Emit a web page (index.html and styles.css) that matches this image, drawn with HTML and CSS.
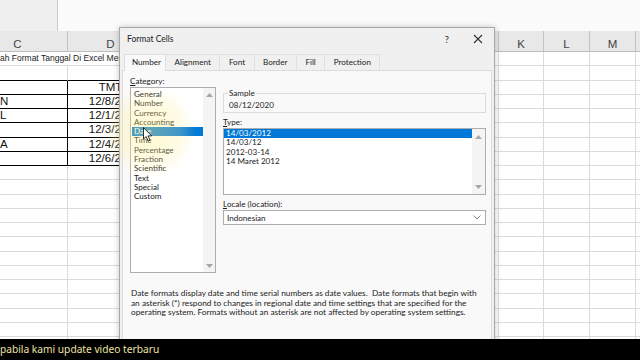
FILE: index.html
```html
<!DOCTYPE html>
<html lang="id">
<head>
  <meta charset="UTF-8" />
  <title>Format Cells - Excel</title>
  <link rel="stylesheet" href="styles.css">
</head>
<body>
<div class="screen">

  <div class="topbar"><div class="namebox"></div></div>

  <table class="sheet">
    <colgroup>
      <col style="width:100px"><col style="width:86px"><col style="width:345px">
      <col style="width:45px"><col style="width:46px"><col style="width:46px"><col style="width:46px">
    </colgroup>
    <tr class="colhdr">
      <td class="ch-c">C</td><td>D</td><td></td><td>K</td><td>L</td><td>M</td><td></td>
    </tr>
    <tr><td colspan="3" class="title">ah Format Tanggal Di Excel Menjadi Teks</td><td></td><td></td><td></td><td></td></tr>
    <tr class="above-box"><td></td><td></td><td></td><td></td><td></td><td></td><td></td></tr>
    <tr class="box"><td class="name"></td><td class="head">TMT</td><td></td><td></td><td></td><td></td><td></td></tr>
    <tr class="box"><td class="name">N</td><td class="date">12/8/2020</td><td></td><td></td><td></td><td></td><td></td></tr>
    <tr class="box"><td class="name">L</td><td class="date">12/1/2020</td><td></td><td></td><td></td><td></td><td></td></tr>
    <tr class="box"><td class="name"></td><td class="date">12/3/2020</td><td></td><td></td><td></td><td></td><td></td></tr>
    <tr class="box"><td class="name">A</td><td class="date">12/4/2020</td><td></td><td></td><td></td><td></td><td></td></tr>
    <tr class="box"><td class="name"></td><td class="date">12/6/2020</td><td></td><td></td><td></td><td></td><td></td></tr>
    <tr><td></td><td></td><td></td><td></td><td></td><td></td><td></td></tr>
    <tr><td></td><td></td><td></td><td></td><td></td><td></td><td></td></tr>
    <tr><td></td><td></td><td></td><td></td><td></td><td></td><td></td></tr>
    <tr><td></td><td></td><td></td><td></td><td></td><td></td><td></td></tr>
    <tr><td></td><td></td><td></td><td></td><td></td><td></td><td></td></tr>
    <tr><td></td><td></td><td></td><td></td><td></td><td></td><td></td></tr>
    <tr><td></td><td></td><td></td><td></td><td></td><td></td><td></td></tr>
    <tr><td></td><td></td><td></td><td></td><td></td><td></td><td></td></tr>
    <tr><td></td><td></td><td></td><td></td><td></td><td></td><td></td></tr>
    <tr><td></td><td></td><td></td><td></td><td></td><td></td><td></td></tr>
    <tr><td></td><td></td><td></td><td></td><td></td><td></td><td></td></tr>
    <tr><td></td><td></td><td></td><td></td><td></td><td></td><td></td></tr>
    <tr><td></td><td></td><td></td><td></td><td></td><td></td><td></td></tr>
    <tr><td></td><td></td><td></td><td></td><td></td><td></td><td></td></tr>
  </table>

  <div class="dialog">
    <div class="titlebar">
      <span class="title">Format Cells</span>
      <span class="help">?</span>
      <span class="close">
        <svg width="10" height="10" viewBox="0 0 10 10"><path d="M1 1L9 9M9 1L1 9" stroke="#333" stroke-width="1.1" fill="none"/></svg>
      </span>
    </div>

    <div class="tabs">
      <span class="tab active">Number</span>
      <span class="tab">Alignment</span>
      <span class="tab">Font</span>
      <span class="tab">Border</span>
      <span class="tab">Fill</span>
      <span class="tab">Protection</span>
    </div>

    <div class="panel">
      <div class="cols">
        <div class="category">
          <div class="label"><u>C</u>ategory:</div>
          <div class="listbox cat-list">
            <ul>
              <li>General</li>
              <li>Number</li>
              <li>Currency</li>
              <li>Accounting</li>
              <li class="sel">Date</li>
              <li>Time</li>
              <li>Percentage</li>
              <li>Fraction</li>
              <li>Scientific</li>
              <li>Text</li>
              <li>Special</li>
              <li>Custom</li>
            </ul>
            <div class="vscroll">
              <svg width="7" height="4" viewBox="0 0 7 4"><path d="M0 4L3.5 0L7 4Z" fill="#a6a6a6"/></svg>
              <svg width="7" height="4" viewBox="0 0 7 4"><path d="M0 0L3.5 4L7 0Z" fill="#a6a6a6"/></svg>
            </div>
          </div>
        </div>

        <div class="details">
          <fieldset class="sample">
            <legend>Sample</legend>
            <div class="sample-val">08/12/2020</div>
          </fieldset>

          <div class="label"><u>T</u>ype:</div>
          <div class="listbox type-list">
            <ul>
              <li class="sel">14/03/2012</li>
              <li>14/03/12</li>
              <li>2012-03-14</li>
              <li>14 Maret 2012</li>
            </ul>
            <div class="vscroll">
              <svg width="7" height="4" viewBox="0 0 7 4"><path d="M0 4L3.5 0L7 4Z" fill="#a6a6a6"/></svg>
              <svg width="7" height="4" viewBox="0 0 7 4"><path d="M0 0L3.5 4L7 0Z" fill="#a6a6a6"/></svg>
            </div>
          </div>

          <div class="label locale-label"><u>L</u>ocale (location):</div>
          <div class="dropdown">
            <span>Indonesian</span>
            <svg width="8" height="5" viewBox="0 0 8 5"><path d="M0.5 0.5L4 4L7.5 0.5" stroke="#777" stroke-width="0.9" fill="none"/></svg>
          </div>
        </div>
      </div>

      <p class="desc">Date formats display date and time serial numbers as date values.&nbsp; Date formats that begin with<br>
        an asterisk (*) respond to changes in regional date and time settings that are specified for the<br>
        operating system. Formats without an asterisk are not affected by operating system settings.</p>
    </div>
  </div>

  <div class="glow"></div>
  <svg class="cursor" width="10" height="15" viewBox="0 0 10 15">
    <path d="M0.5 0.5L0.5 12L3.2 9.6L5.2 14L7 13.2L5 8.9L8.6 8.9Z" fill="#fff" stroke="#000" stroke-width="0.8"/>
  </svg>

  <div class="caption">pabila kami update video terbaru</div>
</div>
</body>
</html>
```

FILE: styles.css
```css
body { margin: 0; font-family: "Noto Sans", sans-serif; }
.screen { position: relative; width: 640px; height: 360px; overflow: hidden; background: #fff; }

/* spreadsheet behind the dialog */
.topbar { height: 31px; background: #fbfbfb; }
.namebox { width: 58px; height: 31px; background: #efefef; border-right: 1px solid #cacaca; box-sizing: border-box; }

.sheet {
  border-collapse: separate;
  border-spacing: 0;
  table-layout: fixed;
  width: 714px;
  margin-left: -32px;
  font-family: "Liberation Sans Narrow", "Liberation Sans", sans-serif;
  font-size: 11.5px;
  color: #111;
}
.sheet td {
  height: 14.25px;
  padding: 0 1px;
  border-right: 1px solid #dadada;
  border-bottom: 1px solid #dadada;
  white-space: nowrap;
  overflow: hidden;
  line-height: 13px;
  box-sizing: border-box;
}
.sheet .colhdr td {
  height: 21px;
  background: #e8e8e8;
  color: #444;
  text-align: center;
  vertical-align: bottom;
  padding-bottom: 0;
  border-right-color: #c4c4c4;
  border-bottom-color: #bdbdbd;
}
.sheet td.title { overflow: visible; padding-left: 32px; }
.sheet .above-box td:nth-child(-n+2) { border-bottom-color: #000; }
.sheet .box td:nth-child(-n+2) { border-bottom-color: #000; border-right-color: #000; }
.sheet td.name { padding-left: 32px; }
.sheet td.head { text-align: center; }
.sheet td.date { text-align: right; padding-right: 13px; }

/* dialog */
.dialog {
  position: absolute;
  left: 119px;
  top: 27px;
  width: 376px;
  height: 345px;
  box-sizing: border-box;
  background: #f0f0f0;
  border: 1px solid #a8a8a8;
  box-shadow: 0 0 6px rgba(0, 0, 0, .22);
  font-family: Lato, "Noto Sans", sans-serif;
  font-size: 8.1px;
  color: #1b1b1b;
}
.titlebar { display: flex; align-items: center; height: 22px; padding-left: 7px; }
.title { font-size: 8.5px; color: #222; }
.help { margin-left: auto; font-size: 10px; color: #333; margin-right: 24px; }
.close { display: flex; margin-right: 11px; }

.tabs { display: flex; align-items: flex-end; margin: 4px 0 0 4px; height: 16px; }
.tab {
  padding: 0 8.5px;
  height: 15px;
  line-height: 15px;
  border: 1px solid #e0e0e0;
  border-bottom: none;
  border-left: none;
  background: #f0f0f0;
}
.tab.active {
  height: 16px;
  background: #f9f9f9;
  border-left: 1px solid #dcdcdc;
  padding: 0 4px 0 7px;
  position: relative;
  top: 1px;
}

.panel {
  margin: 0 2px 0 2px;
  height: 290px;
  background: #f9f9f9;
  border: 1px solid #dcdcdc;
  padding: 5px 5px 0 7px;
}
.cols { display: flex; gap: 7px; }
.category { width: 86px; }
.details { flex: 1; }
.label { height: 10px; line-height: 10px; }
.label u { text-decoration-thickness: 1px; text-underline-offset: 1px; }

.listbox { display: flex; background: #fff; border: 1px solid #adadad; }
.listbox ul { flex: 1; list-style: none; margin: 0; padding: 0; }
.listbox li { height: 9.3px; line-height: 9.3px; padding-left: 2px; white-space: nowrap; }
.listbox li.sel { background: #0078d7; color: #fff; }
.vscroll {
  width: 12px;
  background: #f4f4f4;
  display: flex;
  flex-direction: column;
  justify-content: space-between;
  align-items: center;
  padding: 5px 0 4px;
}
.cat-list { height: 186px; margin-top: 1px; box-sizing: border-box; }
.cat-list ul { padding: 2px 0 0 1px; }
.type-list { height: 67px; margin-top: 1px; box-sizing: border-box; }
.type-list .vscroll { width: 13px; padding: 6px 0 5px; }

.sample {
  margin: 12px 0 0;
  padding: 2px 5px 3px;
  border: 1px solid #dcdcdc;
  height: 25px;
  box-sizing: border-box;
}
.sample legend { padding: 0 1px; margin-left: -1px; line-height: 10px; }
.sample-val { line-height: 10px; }
.sample + .label { margin-top: 4px; }
.locale-label { margin-top: 4px; }

.dropdown {
  display: flex;
  align-items: center;
  justify-content: space-between;
  height: 15px;
  margin-top: 1px;
  padding: 0 4px 0 3px;
  background: #fff;
  border: 1px solid #adadad;
  box-sizing: border-box;
}

.desc {
  margin: 16px 0 0 1px;
  font-size: 8.3px;
  line-height: 9.5px;
  color: #222;
  white-space: nowrap;
}

/* video overlays */
.glow {
  position: absolute;
  left: 104px;
  top: 86px;
  width: 92px;
  height: 92px;
  border-radius: 50%;
  background: radial-gradient(circle, rgba(255, 238, 130, .38) 0%, rgba(255, 240, 150, .26) 45%, rgba(255, 240, 160, 0) 72%);
  pointer-events: none;
}
.cursor { position: absolute; left: 143px; top: 127px; }

.caption {
  position: absolute;
  left: 0;
  bottom: 0;
  width: 640px;
  height: 21px;
  background: #000;
  color: #efe3a4;
  font-size: 10.2px;
  line-height: 21px;
}
```
